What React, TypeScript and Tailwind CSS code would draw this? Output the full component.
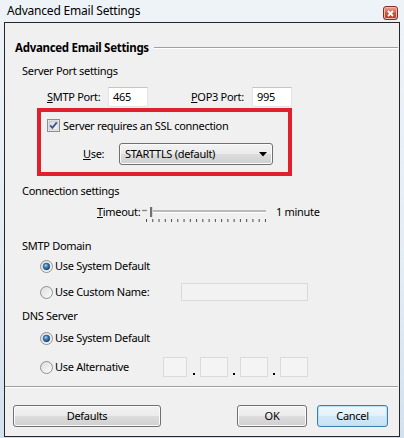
import React from 'react';

const Check: React.FC = () => (
  <svg width="13" height="13" viewBox="0 0 13 13" className="shrink-0">
    <defs>
      <linearGradient id="cbg" x1="0" y1="0" x2="1" y2="1">
        <stop offset="0" stopColor="#d4d6d9" />
        <stop offset="1" stopColor="#fbfbfb" />
      </linearGradient>
    </defs>
    <rect x="0.5" y="0.5" width="12" height="12" fill="#f4f4f4" stroke="#8e8f8f" />
    <rect x="2" y="2" width="9" height="9" fill="url(#cbg)" stroke="#aeb3b9" strokeWidth="0.6" />
    <path d="M3.2 6.4 L5.4 8.8 L9.8 3.4" fill="none" stroke="#3b5795" strokeWidth="1.9" />
  </svg>
);

const Radio: React.FC<{ on?: boolean }> = ({ on }) => (
  <svg width="13" height="13" viewBox="0 0 13 13" className="shrink-0">
    <defs>
      <linearGradient id="rbg" x1="0" y1="0" x2="1" y2="1">
        <stop offset="0" stopColor="#dadcdf" />
        <stop offset="1" stopColor="#fdfdfd" />
      </linearGradient>
      <radialGradient id="rdot" cx="0.4" cy="0.35" r="0.7">
        <stop offset="0" stopColor="#a4d6f7" />
        <stop offset="0.45" stopColor="#3a78b3" />
        <stop offset="1" stopColor="#173f6c" />
      </radialGradient>
    </defs>
    <circle cx="6.5" cy="6.5" r="6" fill="url(#rbg)" stroke="#8e8f8f" />
    {on && <circle cx="6.5" cy="6.5" r="3.4" fill="url(#rdot)" stroke="#1e4773" strokeWidth="0.5" />}
  </svg>
);

const Slider: React.FC = () => {
  const ticks = Array.from({ length: 20 }, (_, i) => 6.5 + i * 6.26);
  return (
    <svg width="130" height="20" viewBox="0 0 130 20" className="shrink-0">
      <line x1="2" y1="6.5" x2="7" y2="6.5" stroke="#8a8a8a" strokeWidth="1.4" />
      <rect x="11" y="6" width="115" height="2" fill="#b9b9b9" />
      <line x1="11" y1="8.5" x2="126" y2="8.5" stroke="#ffffff" />
      <rect x="10" y="3" width="2" height="10" fill="#707070" />
      <line x1="12.5" y1="3" x2="12.5" y2="13" stroke="#d6d6d6" />
      {ticks.map(x => (
        <line key={x} x1={x} y1="15" x2={x} y2="18" stroke="#4a4a4a" />
      ))}
    </svg>
  );
};

const Button: React.FC<{ label: string; focus?: boolean; className?: string }> = ({
  label,
  focus,
  className,
}) => (
  <div
    className={`h-[22px] flex items-center justify-center rounded-[3px] border ${
      focus
        ? 'border-[#3c7fb1] bg-[linear-gradient(#eef7fd_0%,#e3f1fb_50%,#d2e8f7_51%,#c7e2f5_100%)] shadow-[inset_0_0_0_1px_#b8e0f8]'
        : 'border-[#707070] bg-[linear-gradient(#f2f2f2_0%,#ebebeb_50%,#dddddd_51%,#cfcfcf_100%)] shadow-[inset_0_0_0_1px_#fbfbfb]'
    } ${className ?? ''}`}
  >
    {label}
  </div>
);

const App: React.FC = () => {
  return (
    <div className='w-[404px] h-[438px] flex flex-col overflow-hidden bg-[linear-gradient(180deg,#eef3f8_0%,#e4ecf4_60%,#d3e1ee_100%)] text-[11px] text-black font-[family-name:"Noto_Sans",sans-serif] tracking-[-0.3px] leading-[16px]'>
      {/* Title bar */}
      <div className="h-[22px] flex items-start justify-between pl-[7px] pr-[6px] pt-[3px]">
        <span className="text-[12px] tracking-[-0.2px]">Advanced Email Settings</span>
        <div className="mt-[3px] w-[15px] h-[14px] rounded-[3px] border border-[#7e3027] bg-[linear-gradient(#e9a99b,#c7553f_55%,#b43a26)] flex items-center justify-center shadow-[inset_0_0_0_1px_#f0b9ad]">
          <svg width="7" height="7" viewBox="0 0 7 7">
            <path d="M1 1 L6 6 M6 1 L1 6" stroke="#ffffff" strokeWidth="1.8" />
          </svg>
        </div>
      </div>

      {/* Client area */}
      <div className="mx-[4px] mb-[1px] flex-1 border border-[#262626] bg-[#f0f0f0] flex flex-col">
        {/* Group header */}
        <div className="flex items-center pl-[10px] pt-[17px]">
          <span className="font-bold text-[11.5px]">Advanced Email Settings</span>
          <div className="flex-1 ml-[5px] mr-[1px] h-[2px] border-t border-[#a0a0a0] border-b border-b-white" />
        </div>

        <div className="mt-[7px] pl-[17px]">Server Port settings</div>

        {/* Ports */}
        <div className="mt-[8px] flex items-center pl-[42px] h-[20px]">
          <span className="w-[61px]">
            <u>S</u>MTP Port:
          </span>
          <div className="w-[40px] h-[20px] bg-white border border-[#e2e5ea] border-t-[#c2c5cb] pl-[4px] flex items-center">
            465
          </div>
          <span className="ml-[43px] w-[61px]">
            <u>P</u>OP3 Port:
          </span>
          <div className="w-[40px] h-[20px] bg-white border border-[#e2e5ea] border-t-[#c2c5cb] pl-[4px] flex items-center">
            995
          </div>
        </div>

        {/* Highlight box */}
        <div className="mt-[1px] ml-[32px] w-[255px] h-[68px] border-4 border-[#e0202c] flex flex-col">
          <div className="flex items-center gap-[3px] pl-[6px] pt-[7px] h-[20px]">
            <Check />
            <span>Server requires an SSL connection</span>
          </div>
          <div className="mt-[11px] flex items-center pl-[42px]">
            <span className="w-[36px]">
              <u>U</u>se:
            </span>
            <div className="w-[154px] h-[22px] rounded-[3px] border border-[#707070] bg-[linear-gradient(#f2f2f2_0%,#ebebeb_50%,#dddddd_51%,#cfcfcf_100%)] shadow-[inset_0_0_0_1px_#fbfbfb] flex items-center justify-between pl-[5px] pr-[5px]">
              <span>STARTTLS (default)</span>
              <svg width="8" height="5" viewBox="0 0 8 5">
                <path d="M0 0 H8 L4 4.5 Z" fill="#000000" />
              </svg>
            </div>
          </div>
        </div>

        <div className="mt-[7px] pl-[17px]">Connection settings</div>

        {/* Timeout */}
        <div className="mt-[5px] flex items-start pl-[92px] h-[16px]">
          <span className="w-[43px]">
            <u>T</u>imeout:
          </span>
          <div className="h-[16px]">
            <Slider />
          </div>
          <span className="ml-[6px]">1 minute</span>
        </div>

        <div className="mt-[18px] pl-[17px]">SMTP Domain</div>

        <div className="mt-[4px] flex items-center gap-[2px] pl-[35px] h-[16px]">
          <Radio on />
          <span>Use System Default</span>
        </div>

        <div className="mt-[9px] flex items-center gap-[2px] pl-[35px] h-[18px]">
          <Radio />
          <span className="w-[124px]">Use Custom Name:</span>
          <div className="w-[127px] h-[18px] border border-[#dadada] bg-[#f2f2f2]" />
        </div>

        <div className="mt-[7px] pl-[17px]">DNS Server</div>

        <div className="mt-[6px] flex items-center gap-[2px] pl-[35px] h-[16px]">
          <Radio on />
          <span>Use System Default</span>
        </div>

        <div className="mt-[11px] flex items-center gap-[2px] pl-[35px] h-[20px]">
          <Radio />
          <span className="w-[106px]">Use Alternative</span>
          <div className="flex items-end">
            <div className="w-[24px] h-[20px] border border-[#dadada] bg-[#f4f4f4]" />
            <div className="w-[13px] flex justify-center pb-[2px]">
              <div className="w-[2px] h-[2px] bg-black" />
            </div>
            <div className="w-[28px] h-[20px] border border-[#dadada] bg-[#f4f4f4]" />
            <div className="w-[12px] flex justify-center pb-[2px]">
              <div className="w-[2px] h-[2px] bg-black" />
            </div>
            <div className="w-[28px] h-[20px] border border-[#dadada] bg-[#f4f4f4]" />
            <div className="w-[12px] flex justify-center pb-[2px]">
              <div className="w-[2px] h-[2px] bg-black" />
            </div>
            <div className="w-[28px] h-[20px] border border-[#dadada] bg-[#f4f4f4]" />
          </div>
        </div>

        {/* Separator */}
        <div className="mt-[9px] mr-[1px] h-[2px] border-t border-[#a0a0a0] border-b border-b-white" />

        {/* Buttons */}
        <div className="mt-[17px] flex items-center pl-[8px] pr-[11px]">
          <Button label="Defaults" className="w-[148px]" />
          <div className="flex-1" />
          <Button label="OK" className="w-[70px]" />
          <Button label="Cancel" focus className="w-[71px] ml-[10px]" />
        </div>
      </div>
    </div>
  );
};

export default App;
